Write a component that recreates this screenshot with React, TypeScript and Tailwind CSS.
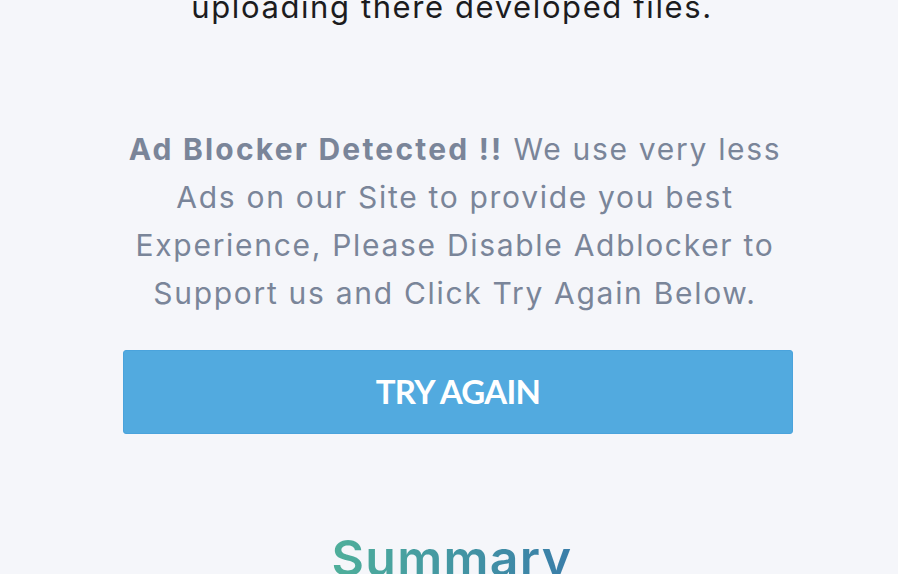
export default function App() {
  return (
    <div
      className="min-h-screen bg-[#f5f6fa] overflow-hidden"
      style={{ fontFamily: 'Inter, "Noto Sans", sans-serif' }}
    >
      <div className="ml-[123px] w-[670px]">
        <p className="-mt-[17px] pr-[12px] text-center text-[31px] leading-[48px] tracking-[1.6px] text-[#1c1c1e]">
          uploading there developed files.
        </p>

        <p className="mx-auto mt-[94px] w-[660px] pr-[6px] text-center text-[30px] leading-[48px] tracking-[1.7px] text-[#7a8599]">
          <strong className="font-bold tracking-[2.2px]">Ad Blocker Detected !!</strong> We use very less Ads on
          our Site to provide you best Experience, Please Disable Adblocker to Support us and Click Try Again
          Below.
        </p>

        <button
          type="button"
          className="mt-[33px] flex h-[84px] w-full items-center justify-center rounded-[3px] border border-[#4aa3dc] bg-[#52aadf] text-[33px] font-bold tracking-[-0.7px] text-white"
          style={{ fontFamily: 'Lato, sans-serif' }}
        >
          TRY AGAIN
        </button>

        <h2 className="mt-[94px] pr-[12px] text-center text-[50px] font-semibold leading-[60px] tracking-[1.3px]">
          <span className="bg-gradient-to-r from-[#4faf9a] to-[#3a7da9] bg-clip-text text-transparent">
            Summary
          </span>
        </h2>
      </div>
    </div>
  );
}
